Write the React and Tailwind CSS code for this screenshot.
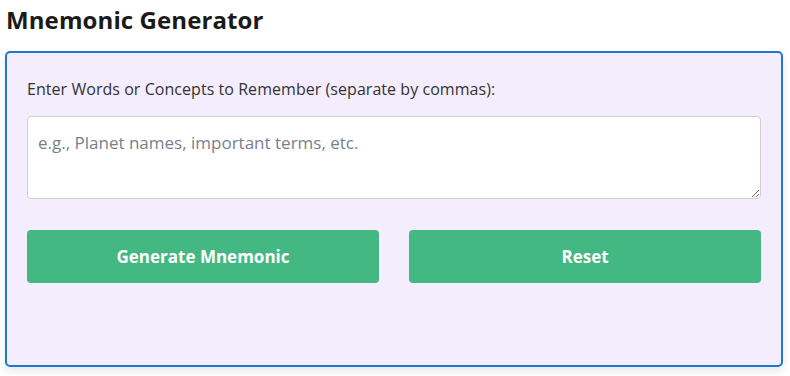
export default function App() {
  return (
    <div className="w-[790px] h-[376px] bg-white px-[5px] pt-[5px]" style={{ fontFamily: '"Open Sans", "Noto Sans", sans-serif' }}>
      <h2 className="text-[24px] font-bold text-[#1a1a1a] leading-[30px] ml-[1px] tracking-[0.1px]">Mnemonic Generator</h2>
      <div className="mt-[16px] w-[778px] h-[316px] border-2 border-[#1f77d0] rounded-[5px] bg-[#f4edfd] shadow-[0_4px_8px_rgba(0,0,0,0.1)] px-[20px] pt-[26px]">
        <label className="block text-[16px] text-[#333] leading-[20px] tracking-[0.05px]">Enter Words or Concepts to Remember (separate by commas):</label>
        <textarea
          className="block mt-[17px] w-full h-[83px] bg-white border border-[#cfcfcf] rounded-[4px] px-[10px] pt-[16px] pb-[14px] text-[17px] leading-[20px] placeholder:text-[#777f8c] outline-none"
          style={{ fontFamily: 'inherit' }}
          placeholder="e.g., Planet names, important terms, etc."
        />
        <div className="grid grid-cols-2 gap-[30px] mt-[31px]">
          <button className="h-[53px] bg-[#43b883] text-white font-bold text-[17px] rounded-[4px]">Generate Mnemonic</button>
          <button className="h-[53px] bg-[#43b883] text-white font-bold text-[17px] rounded-[4px]">Reset</button>
        </div>
      </div>
    </div>
  );
}
